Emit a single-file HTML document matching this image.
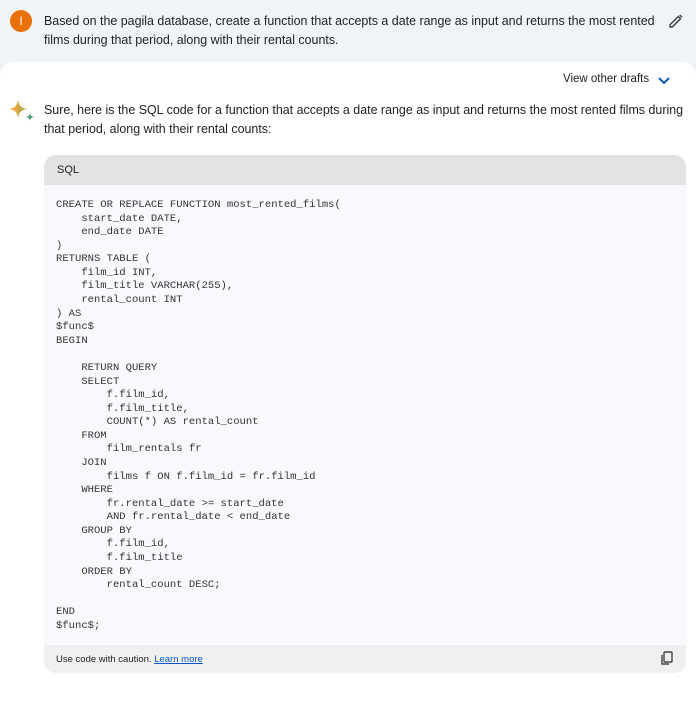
<!DOCTYPE html>
<html><head><style>
body{margin:0;width:696px;height:680px;background:#f0f4f9;font-family:"Liberation Sans",sans-serif;color:#1f1f1f;overflow:hidden;position:relative}
.a{position:absolute}
.card{position:absolute;left:0;top:62px;width:696px;height:640px;background:#fff;border-radius:14px 14px 0 0}
.t{font-size:12.45px;line-height:19px;white-space:nowrap}
.code{position:absolute;left:44px;top:155px;width:642px;height:518px;background:#f8f9fc;border-radius:12px;overflow:hidden}
.hdr{height:30px;background:#e3e3e3;font-size:11px;line-height:30px;padding-left:13px;color:#1f1f1f}
pre{margin:0;position:absolute;left:12px;top:44px;font-family:"Liberation Mono",monospace;font-size:10.55px;line-height:13.58px;color:#333}
.ft{position:absolute;left:0;bottom:0;width:642px;height:28px;background:#f0f0f0;font-size:9.5px;line-height:30px;padding-left:12px;box-sizing:border-box}
.ft a{color:#0b57d0;text-decoration:underline}
</style></head><body>
<div class="a" style="left:10px;top:10px;width:22px;height:22px;border-radius:50%;background:#e8710a;color:#fff;font-size:12px;text-align:center;line-height:22px">I</div>
<div class="a t" style="left:44px;top:12px">Based on the pagila database, create a function that accepts a date range as input and returns the most rented<br>films during that period, along with their rental counts.</div>
<svg class="a" style="left:667px;top:12px" width="18" height="18" viewBox="0 0 24 24"><path d="M4 20h3L18 9l-3-3L4 17z M15 6l3 3 M17 4l3 3" fill="none" stroke="#444" stroke-width="2"/></svg>
<div class="card"></div>
<div class="a" style="left:563px;top:73px;font-size:11.5px;color:#1f1f1f">View other drafts</div>
<svg class="a" style="left:657px;top:75px" width="14" height="12" viewBox="0 0 14 12"><path d="M2 3l5 5 5-5" fill="none" stroke="#0b57d0" stroke-width="2"/></svg>
<svg class="a" style="left:8px;top:99px" width="26" height="24" viewBox="0 0 26 24"><path d="M10 1C11 7 13 9 19 10 13 11 11 13 10 19 9 13 7 11 1 10 7 9 9 7 10 1z" fill="#e9a93a"/><path d="M10 1C11 7 13 9 19 10 13 11 11 13 10 19z" fill="#7ba25b" opacity=".35"/><path d="M22 14C22.5 16.5 23.5 17.5 26 18 23.5 18.5 22.5 19.5 22 22 21.5 19.5 20.5 18.5 18 18 20.5 17.5 21.5 16.5 22 14z" fill="#4e9b6f"/></svg>
<div class="a t" style="left:44px;top:101px">Sure, here is the SQL code for a function that accepts a date range as input and returns the most rented films during<br>that period, along with their rental counts:</div>
<div class="code"><div class="hdr">SQL</div>
<pre>CREATE OR REPLACE FUNCTION most_rented_films(
    start_date DATE,
    end_date DATE
)
RETURNS TABLE (
    film_id INT,
    film_title VARCHAR(255),
    rental_count INT
) AS
$func$
BEGIN

    RETURN QUERY
    SELECT
        f.film_id,
        f.film_title,
        COUNT(*) AS rental_count
    FROM
        film_rentals fr
    JOIN
        films f ON f.film_id = fr.film_id
    WHERE
        fr.rental_date &gt;= start_date
        AND fr.rental_date &lt; end_date
    GROUP BY
        f.film_id,
        f.film_title
    ORDER BY
        rental_count DESC;

END
$func$;</pre>
<div class="ft">Use code with caution. <a>Learn more</a></div>
</div>
<svg class="a" style="left:660px;top:651px" width="14" height="15" viewBox="0 0 14 15"><rect x="4" y="1" width="8" height="10" rx="1" fill="none" stroke="#444" stroke-width="1.4"/><path d="M2 4v9h7" fill="none" stroke="#444" stroke-width="1.4"/></svg>
</body></html>
